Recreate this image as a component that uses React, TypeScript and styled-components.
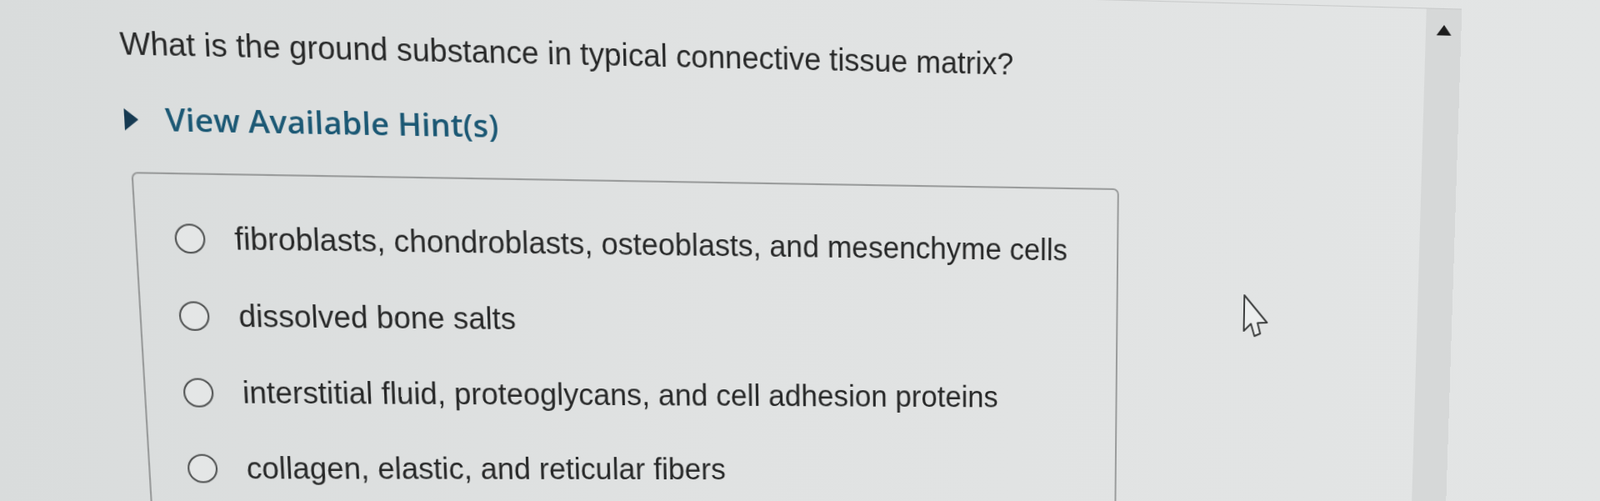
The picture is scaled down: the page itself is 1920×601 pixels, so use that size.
import React from 'react';
import styled, { createGlobalStyle } from 'styled-components';

const GlobalStyle = createGlobalStyle`
    html, body {
        margin: 0;
        padding: 0;
        overflow: hidden;
    }
`;

// whole screen, the photo was taken at a slight angle
const Screen = styled.div`
    width: 1920px;
    height: 601px;
    overflow: hidden;
    background: linear-gradient(90deg, #d9dcdc 0%, #e0e2e2 45%, #e3e5e5 100%);
`;

const Stage = styled.div`
    position: relative;
    width: 1920px;
    height: 720px;
    padding-top: 20px;
    box-sizing: border-box;
    transform-origin: 1183px 671px;
    transform: perspective(1000px) rotateX(-3.354deg) rotateY(2.47deg);
`;

const Frame = styled.div`
    display: flex;
    width: 1747px;
    height: 700px;
    border-top: 1px solid #c8caca;
`;

const Content = styled.div`
    flex: 1;
    padding: 54px 0 0 221px;
    font-family: 'Liberation Sans', Arial, sans-serif;
    color: #272828;
`;

const Question = styled.div`
    font-size: 34.4px;
    line-height: 40px;
    white-space: nowrap;
`;

const HintToggle = styled.div`
    display: flex;
    align-items: center;
    gap: 29px;
    margin-top: 41px;
    cursor: pointer;
`;

const HintArrow = styled.span`
    width: 0;
    height: 0;
    margin-top: 2px;
    border-top: 12px solid transparent;
    border-bottom: 12px solid transparent;
    border-left: 15px solid #163a52;
`;

const HintLabel = styled.span`
    font-family: 'Open Sans', 'Liberation Sans', sans-serif;
    font-weight: 600;
    font-size: 35px;
    line-height: 40px;
    color: #1b5874;
    white-space: nowrap;
`;

const AnswerBox = styled.div`
    display: flex;
    flex-direction: column;
    gap: 46px;
    width: 1115px;
    box-sizing: border-box;
    margin: 38px 0 0 4px;
    padding: 50px 0 80px 41px;
    border: 2px solid #9a9c9c;
    border-radius: 7px;
`;

const Option = styled.label`
    display: flex;
    align-items: center;
    gap: 32px;
    font-size: 34.2px;
    line-height: 40px;
    white-space: nowrap;
`;

const Radio = styled.span`
    width: 33px;
    height: 33px;
    box-sizing: border-box;
    border: 2px solid #525454;
    border-radius: 50%;
    background: #e4e6e6;
    flex-shrink: 0;
`;

const Scrollbar = styled.div`
    width: 43px;
    display: flex;
    justify-content: center;
    padding-top: 18px;
    background: #d6d8d8;
`;

const UpArrow = styled.span`
    width: 0;
    height: 0;
    border-left: 9px solid transparent;
    border-right: 9px solid transparent;
    border-bottom: 12px solid #1c1c1c;
`;

const Pointer = styled.div`
    position: absolute;
    left: 1490px;
    top: 354px;
    width: 32px;
    height: 52px;
`;

const answers = [
    'fibroblasts, chondroblasts, osteoblasts, and mesenchyme cells',
    'dissolved bone salts',
    'interstitial fluid, proteoglycans, and cell adhesion proteins',
    'collagen, elastic, and reticular fibers',
];

const App: React.FC = () => {
    return (
        <Screen>
            <GlobalStyle />
            <Stage>
                <Frame>
                    <Content>
                        <Question>What is the ground substance in typical connective tissue matrix?</Question>
                        <HintToggle>
                            <HintArrow />
                            <HintLabel>View Available Hint(s)</HintLabel>
                        </HintToggle>
                        <AnswerBox>
                            {answers.map((answer, i) => (
                                <Option key={i}>
                                    <Radio />
                                    <span>{answer}</span>
                                </Option>
                            ))}
                        </AnswerBox>
                    </Content>
                    <Scrollbar>
                        <UpArrow />
                    </Scrollbar>
                </Frame>
                <Pointer>
                    <svg width="32" height="52" viewBox="-2 -2 32 52">
                        <polygon
                            points="0,0 0,42 8.5,33.5 13,48 20,45 16.5,32.5 28,32"
                            fill="#eceeee"
                            stroke="#3a3c3c"
                            strokeWidth="2"
                            strokeLinejoin="round"
                        />
                    </svg>
                </Pointer>
            </Stage>
        </Screen>
    );
};

export default App;
